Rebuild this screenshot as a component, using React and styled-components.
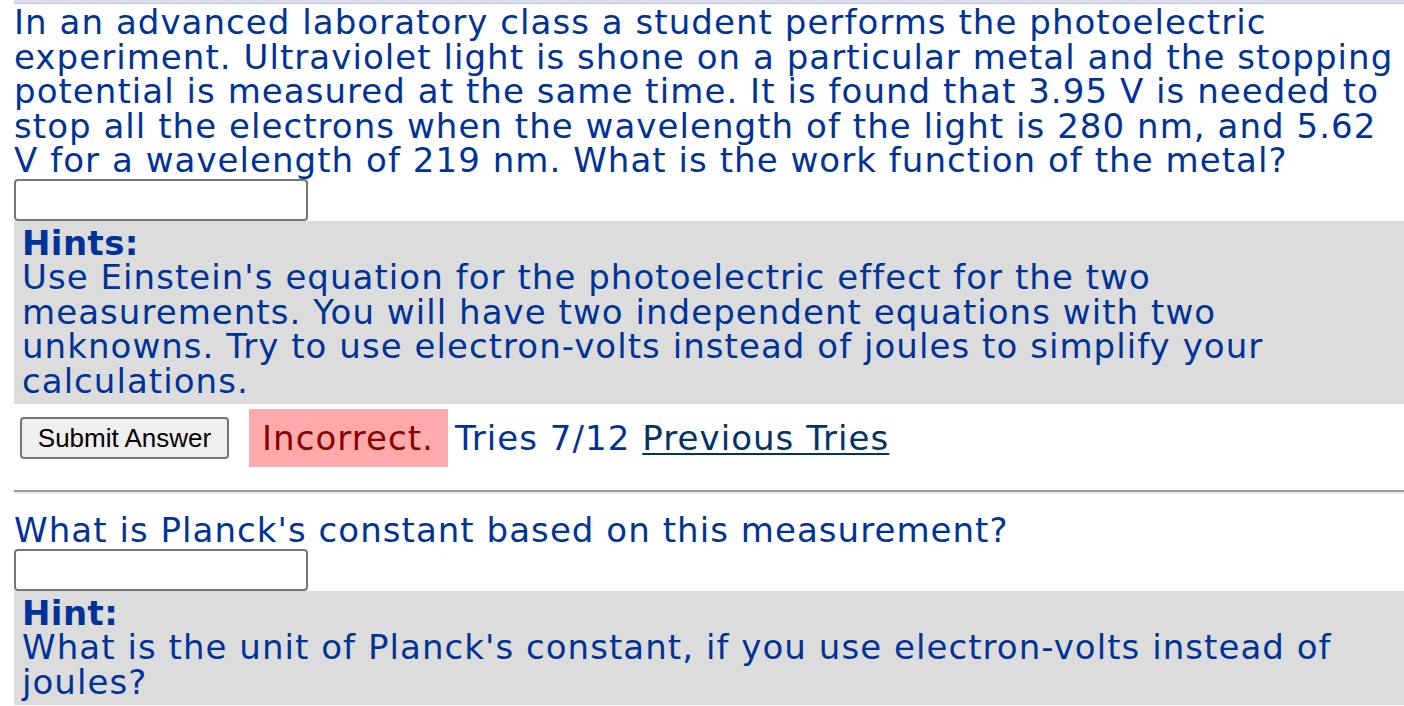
import React from 'react';
import styled, { createGlobalStyle } from 'styled-components';

const GlobalStyle = createGlobalStyle`
  html, body {
    margin: 0;
    padding: 0;
    background: #ffffff;
    overflow: hidden;
  }
  body {
    font-family: "DejaVu Sans", Verdana, sans-serif;
  }
`;

const Page = styled.div`
  padding-left: 14px;
  width: 1390px;
  color: #003399;
  font-size: 34px;
  line-height: 34.5px;
  letter-spacing: 1.05px;
`;

const TopStrip = styled.div`
  height: 3px;
  background: #dcdcf2;
  border-bottom: 1px solid #c8c8c8;
`;

const Question = styled.p`
  margin: 0;
  padding-top: ${(p) => p.$top || 0}px;
`;

const AnswerInput = styled.input`
  display: block;
  box-sizing: border-box;
  width: 294px;
  height: 42px;
  margin: 1px 0 0 0;
  border: 2px solid #777;
  border-radius: 4px;
  background: #fff;
  font-size: 16px;
`;

const HintBox = styled.div`
  background: #dcdcdc;
  padding: 5px 8px 6px 8px;
`;

const HintTitle = styled.div`
  font-weight: bold;
  letter-spacing: 0.4px;
`;

const SubmitRow = styled.div`
  display: flex;
  align-items: center;
  padding: 5px 0 0 6px;
  height: 58px;
`;

const SubmitButton = styled.button`
  box-sizing: border-box;
  width: 209px;
  height: 42px;
  margin-right: 20px;
  font-family: "Liberation Sans", Arial, sans-serif;
  font-size: 26px;
  letter-spacing: 0;
  color: #000;
  background: #efefef;
  border: 2px solid #767676;
  border-radius: 4px;
  padding: 0;
`;

const Incorrect = styled.span`
  display: inline-block;
  background: #ffaaaa;
  color: #880000;
  padding: 12px 14px 12px 13px;
  margin-right: 7px;
`;

const Tries = styled.span`
  white-space: pre;
`;

const PrevLink = styled.a`
  color: #003366;
  text-decoration: underline;
  text-decoration-thickness: 2px;
  text-underline-offset: 3px;
`;

const Rule = styled.hr`
  margin: 23px 0 0 0;
  height: 0;
  border: 0;
  border-top: 2px solid #9a9a9a;
  border-bottom: 2px solid #ececec;
`;

export default function App() {
  return (
    <>
      <GlobalStyle />
      <Page>
        <TopStrip />
        <Question $top={1}>
          In an advanced laboratory class a student performs the photoelectric
          experiment. Ultraviolet light is shone on a particular metal and the
          stopping potential is measured at the same time. It is found that
          3.95 V is needed to stop all the electrons when the wavelength of the
          light is 280 nm, and 5.62 V for a wavelength of 219 nm. What is the
          work function of the metal?
        </Question>
        <AnswerInput type="text" />
        <HintBox>
          <HintTitle>Hints:</HintTitle>
          Use Einstein's equation for the photoelectric effect for the two
          measurements. You will have two independent equations with two
          unknowns. Try to use electron-volts instead of joules to simplify
          your calculations.
        </HintBox>
        <SubmitRow>
          <SubmitButton type="button">Submit Answer</SubmitButton>
          <Incorrect>Incorrect.</Incorrect>
          <Tries>Tries 7/12 </Tries>
          <PrevLink href="#">Previous Tries</PrevLink>
        </SubmitRow>
        <Rule />
        <Question $top={19}>
          What is Planck's constant based on this measurement?
        </Question>
        <AnswerInput type="text" />
        <HintBox>
          <HintTitle>Hint:</HintTitle>
          What is the unit of Planck's constant, if you use electron-volts
          instead of joules?
        </HintBox>
      </Page>
    </>
  );
}
